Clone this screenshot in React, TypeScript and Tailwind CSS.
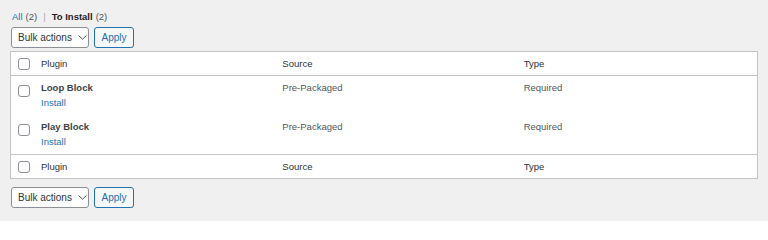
import React from "react";

const Checkbox = () => (
  <span className="block w-[12px] h-[12px] rounded-[3px] border border-[#8c8f94] bg-white" />
);

const Chevron = () => (
  <svg width="9" height="5" viewBox="0 0 9 5" className="ml-[6px]">
    <path d="M0.6 0.6 L4.5 4.2 L8.4 0.6" fill="none" stroke="#50575e" strokeWidth="1" />
  </svg>
);

const Actions = () => (
  <div className="flex gap-[5px] ml-[11px]">
    <div className="h-[21px] w-[78px] flex items-center pl-[6px] bg-white border border-[#8c8f94] rounded-[3px] text-[10px] text-[#2c3338]">
      <span>Bulk actions</span>
      <Chevron />
    </div>
    <div className="h-[21px] w-[40px] flex items-center justify-center bg-[#f6f7f7] border border-[#2271b1] rounded-[3px] text-[10px] text-[#2271b1]">
      Apply
    </div>
  </div>
);

const HeadRow = ({ top }: { top?: boolean }) => (
  <div
    className={`grid grid-cols-[22px_1fr_1fr_1fr] h-[24px] items-center text-[#2c3338] ${
      top ? "border-b border-[#c3c4c7]" : "border-t border-[#c3c4c7]"
    }`}
  >
    <div className="pl-[7px] pt-[1px]">
      <Checkbox />
    </div>
    <div className="pl-[8px]">Plugin</div>
    <div className="pl-[8px]">Source</div>
    <div className="pl-[8px]">Type</div>
  </div>
);

const Row = ({ name }: { name: string }) => (
  <div className="grid grid-cols-[22px_1fr_1fr_1fr] h-[39px] text-[#50575e]">
    <div className="pl-[7px] pt-[9px]">
      <Checkbox />
    </div>
    <div className="pl-[8px] pt-[5px]">
      <div className="font-bold text-[#3c434a] leading-[14px]">{name}</div>
      <div className="text-[#2271b1] leading-[14px] mt-[1px]">Install</div>
    </div>
    <div className="pl-[8px] pt-[5px] leading-[14px]">Pre-Packaged</div>
    <div className="pl-[8px] pt-[5px] leading-[14px]">Required</div>
  </div>
);

export default function App() {
  return (
    <div
      className="w-[768px] h-[221px] bg-[#f0f0f1] overflow-hidden"
      style={{ fontFamily: '"Liberation Sans", Arial, sans-serif' }}
    >
      <div className="pt-[10px] pl-[12px] text-[9.5px] leading-[14px] text-[#50575e] flex">
        <span className="text-[#2271b1]">All</span>
        <span className="ml-[3px]">(2)</span>
        <span className="mx-[6px] text-[#a7aaad]">|</span>
        <span className="font-bold text-[#1d2327]">To Install</span>
        <span className="ml-[3px]">(2)</span>
      </div>
      <div className="mt-[3px]">
        <Actions />
      </div>
      <div className="ml-[10px] mt-[3px] w-[748px] bg-white border border-[#c3c4c7] text-[9.5px] leading-[14px]">
        <HeadRow top />
        <Row name="Loop Block" />
        <Row name="Play Block" />
        <HeadRow />
      </div>
      <div className="mt-[8px]">
        <Actions />
      </div>
    </div>
  );
}
